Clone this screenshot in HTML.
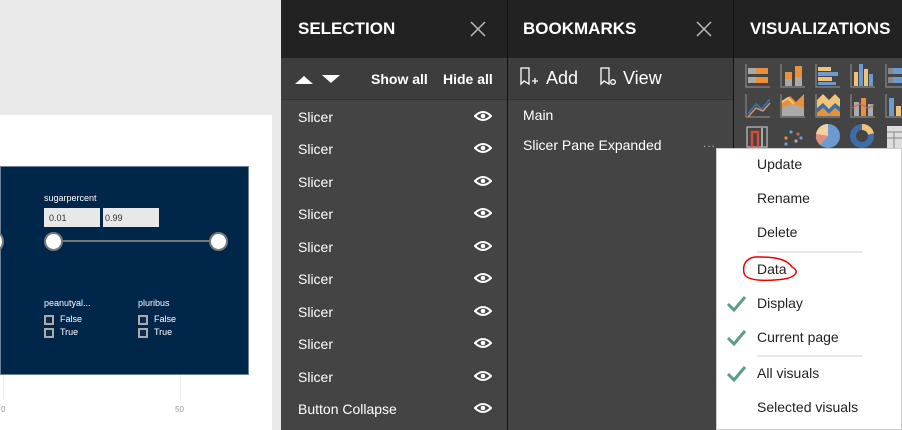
<!DOCTYPE html>
<html><head><style>
*{margin:0;padding:0;box-sizing:border-box}
body{width:902px;height:430px;overflow:hidden;position:relative;background:#eaeaea;font-family:"Liberation Sans",sans-serif}
.abs{position:absolute}
.hdr{background:#222;height:58px;top:0}
.ht{color:#fff;font-weight:bold;font-size:17px;top:19px}
.pane{background:#444;top:58px;height:372px}
.tool{background:#3d3d3d;top:58px;height:41px}
.sep{background:#333;height:1px;top:99px}
.row{color:#fff;font-size:14px;left:298px}
.mi{color:#222;font-size:14px;left:757px}
.cb{width:10px;height:10px;border:2px solid #aaa;background:#0f2a4c}
.sl{color:#fff;font-size:9px}
</style></head><body>
<div class="abs" style="left:0;top:115px;width:272px;height:315px;background:#fff"></div>
<div class="abs" style="left:0;top:166px;width:249px;height:209px;background:#00264a;border:1px solid #6b7f96"></div>
<div class="abs sl" style="left:44px;top:193px">sugarpercent</div>
<div class="abs" style="left:44px;top:208px;width:56px;height:19px;background:#e8e8e8;font-size:9px;padding:5px 5px;color:#333">0.01</div>
<div class="abs" style="left:103px;top:208px;width:56px;height:19px;background:#e8e8e8;font-size:9px;padding:5px 2px;color:#333">0.99</div>
<div class="abs" style="left:54px;top:240px;width:166px;height:2px;background:#777"></div>
<div class="abs" style="left:44px;top:232px;width:19px;height:19px;border-radius:50%;background:#fff;border:2px solid #777"></div>
<div class="abs" style="left:209px;top:232px;width:19px;height:19px;border-radius:50%;background:#fff;border:2px solid #777"></div>
<div class="abs" style="left:-10px;top:232px;width:14px;height:19px;border-radius:50%;background:#fff;border:2px solid #777"></div>
<div class="abs sl" style="left:44px;top:298px">peanutyal...</div>
<div class="abs sl" style="left:138px;top:298px">pluribus</div>
<div class="abs cb" style="left:44px;top:315px"></div><div class="abs sl" style="left:60px;top:314px">False</div>
<div class="abs cb" style="left:44px;top:328px"></div><div class="abs sl" style="left:60px;top:327px">True</div>
<div class="abs cb" style="left:138px;top:315px"></div><div class="abs sl" style="left:154px;top:314px">False</div>
<div class="abs cb" style="left:138px;top:328px"></div><div class="abs sl" style="left:154px;top:327px">True</div>
<div class="abs" style="left:3px;top:375px;width:1px;height:25px;background:#eee"></div>
<div class="abs" style="left:180px;top:375px;width:1px;height:25px;background:#eee"></div>
<div class="abs" style="left:1px;top:405px;font-size:8px;color:#999">0</div>
<div class="abs" style="left:175px;top:405px;font-size:8px;color:#999">50</div>

<div class="abs hdr" style="left:281px;width:621px"></div>
<div class="abs pane" style="left:281px;width:621px"></div>
<div class="abs tool" style="left:281px;width:452px"></div>
<div class="abs sep" style="left:281px;width:452px"></div>
<div class="abs" style="left:507px;top:0;width:1px;height:430px;background:#111"></div>
<div class="abs" style="left:733px;top:0;width:1px;height:430px;background:#111"></div>
<div class="abs ht" style="left:298px">SELECTION</div>
<div class="abs ht" style="left:523px">BOOKMARKS</div>
<div class="abs ht" style="left:750px">VISUALIZATIONS</div>
<svg class="abs" style="left:469px;top:20px" width="18" height="18"><path d="M2 2L16 16M16 2L2 16" stroke="#bbb" stroke-width="1.5"/></svg>
<svg class="abs" style="left:695px;top:20px" width="18" height="18"><path d="M2 2L16 16M16 2L2 16" stroke="#bbb" stroke-width="1.5"/></svg>
<svg class="abs" style="left:295px;top:73px" width="50" height="12"><path d="M0 11L9 3L18 11Z" fill="#fff"/><path d="M27 2L45 2L36 10Z" fill="#fff"/></svg>
<div class="abs" style="left:371px;top:71px;color:#fff;font-weight:bold;font-size:14px">Show all</div>
<div class="abs" style="left:443px;top:71px;color:#fff;font-weight:bold;font-size:14px">Hide all</div>
<div class="abs row" style="top:109px">Slicer</div>
<div class="abs row" style="top:141px">Slicer</div>
<div class="abs row" style="top:174px">Slicer</div>
<div class="abs row" style="top:206px">Slicer</div>
<div class="abs row" style="top:239px">Slicer</div>
<div class="abs row" style="top:271px">Slicer</div>
<div class="abs row" style="top:304px">Slicer</div>
<div class="abs row" style="top:336px">Slicer</div>
<div class="abs row" style="top:369px">Slicer</div>
<div class="abs row" style="top:401px">Button Collapse</div>
<svg class="abs" style="left:474px;top:110px" width="18" height="310">
<g id="e"><path d="M1 6Q9 -2 17 6Q9 14 1 6Z" fill="none" stroke="#fff" stroke-width="2"/><circle cx="9" cy="6" r="2.3" fill="#fff"/></g>
<use href="#e" y="32"/><use href="#e" y="65"/><use href="#e" y="97"/><use href="#e" y="130"/><use href="#e" y="162"/><use href="#e" y="195"/><use href="#e" y="227"/><use href="#e" y="260"/><use href="#e" y="292"/>
</svg>

<svg class="abs" style="left:519px;top:67px" width="100" height="22"><path d="M2 1V17L5 14L10 17V1Z" fill="none" stroke="#fff" stroke-width="1.3"/><path d="M13 14H19M16 11V17" stroke="#fff" stroke-width="1.3"/>
<path d="M82 1V17L85 14L90 17V1Z" fill="none" stroke="#fff" stroke-width="1.3"/><circle cx="94" cy="15" r="2.3" fill="none" stroke="#fff" stroke-width="1.3"/></svg>
<div class="abs" style="left:546px;top:68px;color:#fff;font-size:18px">Add</div>
<div class="abs" style="left:623px;top:68px;color:#fff;font-size:18px">View</div>
<div class="abs" style="left:523px;top:107px;color:#fff;font-size:14px">Main</div>
<div class="abs" style="left:523px;top:137px;color:#fff;font-size:14px">Slicer Pane Expanded</div>
<div class="abs" style="left:703px;top:136px;color:#aaa;font-size:12px;letter-spacing:1px">...</div>

<svg class="abs" style="left:744px;top:62px" width="158" height="86">
<g stroke="#888" stroke-width="1.2" fill="none">
<path d="M2 2V25H26"/><path d="M37 2V25H61"/><path d="M72 2V25H96"/><path d="M107 2V25H131"/><path d="M142 2V25H158"/>
<path d="M2 32V55H26"/><path d="M37 32V55H61"/><path d="M72 32V55H96"/><path d="M107 32V55H131"/><path d="M142 32V55H158"/>
</g>
<g>
<rect x="4" y="6" width="20" height="6" fill="#aaa"/><rect x="12" y="6" width="12" height="6" fill="#e8913a"/><rect x="4" y="15" width="20" height="6" fill="#aaa"/><rect x="12" y="15" width="12" height="6" fill="#e8913a"/>
<rect x="41" y="10" width="7" height="14" fill="#aaa"/><rect x="41" y="10" width="7" height="7" fill="#e8913a"/><rect x="51" y="4" width="7" height="20" fill="#aaa"/><rect x="51" y="4" width="7" height="11" fill="#e8913a"/>
<rect x="74" y="5" width="13" height="4" fill="#f2c27a"/><rect x="74" y="10" width="20" height="4" fill="#6c9bd2"/><rect x="74" y="15" width="14" height="4" fill="#f2c27a"/><rect x="74" y="20" width="18" height="3" fill="#6c9bd2"/>
<rect x="110" y="10" width="4" height="14" fill="#f2c27a"/><rect x="115" y="2" width="4" height="22" fill="#6c9bd2"/><rect x="120" y="7" width="4" height="17" fill="#f2c27a"/><rect x="125" y="12" width="4" height="12" fill="#6c9bd2"/>
<rect x="144" y="6" width="14" height="6" fill="#6c9bd2"/><rect x="144" y="6" width="5" height="6" fill="#888"/><rect x="144" y="15" width="14" height="6" fill="#6c9bd2"/><rect x="144" y="15" width="5" height="6" fill="#888"/>
<path d="M4 52L12 42L18 47L26 37" stroke="#3d6ea8" stroke-width="1.8" fill="none"/><path d="M4 55L12 46L19 49L26 41" stroke="#d0906a" stroke-width="1.5" fill="none"/>
<path d="M38 54V40L46 34L52 40L60 32V54Z" fill="#e8913a"/><path d="M38 54V46L47 42L60 46V54Z" fill="#aaa"/><path d="M38 40L44 36L50 42" stroke="#f2c27a" stroke-width="2" fill="none"/>
<path d="M73 54V38L79 32L85 38L91 32L96 37V54Z" fill="#f2c27a"/><path d="M73 46L79 41L85 47L91 41L96 45V50L91 46L85 52L79 46L73 51Z" fill="#3d6ea8"/><path d="M73 51L79 46L85 52L91 46L96 50V54H73Z" fill="#e8913a"/>
<rect x="110" y="40" width="5" height="14" fill="#aaa"/><rect x="117" y="36" width="5" height="18" fill="#e8913a"/><rect x="124" y="42" width="5" height="12" fill="#aaa"/><path d="M108 46L116 42L124 46L130 43" stroke="#d0605a" stroke-width="1.2" fill="none"/>
<rect x="145" y="36" width="5" height="18" fill="#6c9bd2"/><rect x="152" y="44" width="5" height="10" fill="#f2c27a"/>
<rect x="3" y="65" width="20" height="20" fill="none" stroke="#aaa" stroke-width="1.5"/><path d="M8 85V70H14V85" stroke="#d84a3a" stroke-width="2.5" fill="none"/><path d="M18 66V85" stroke="#aaa" stroke-width="2"/>
<circle cx="42" cy="76" r="1.6" fill="#e8913a"/><circle cx="47" cy="70" r="1.6" fill="#6c9bd2"/><circle cx="54" cy="72" r="1.6" fill="#d0605a"/><circle cx="52" cy="79" r="1.6" fill="#aaa"/><circle cx="57" cy="76" r="1.6" fill="#6c9bd2"/><circle cx="42" cy="82" r="1.6" fill="#6c9bd2"/>
<circle cx="84" cy="74" r="12" fill="#6c9bd2"/><path d="M84 74L84 62A12 12 0 0 0 72 72Z" fill="#f2d0a0"/><path d="M84 74L72 72A12 12 0 0 0 76 83Z" fill="#e0907a"/>
<circle cx="118" cy="74" r="9" fill="none" stroke="#3d6ea8" stroke-width="6"/><path d="M118 65A9 9 0 0 1 127 72" stroke="#f2c27a" stroke-width="6" fill="none"/>
<rect x="143" y="64" width="15" height="22" fill="#ddd"/><path d="M143 70H158M143 76H158M150 70V86" stroke="#888" stroke-width="1"/>
</g></svg>

<div class="abs" style="left:716px;top:148px;width:186px;height:282px;background:#fff;border:1px solid #ccc"></div>
<div class="abs mi" style="top:156px">Update</div>
<div class="abs mi" style="top:190px">Rename</div>
<div class="abs mi" style="top:224px">Delete</div>
<div class="abs" style="left:757px;top:251px;width:105px;height:2px;background:#e6e6e6"></div>
<div class="abs mi" style="top:261px">Data</div>
<div class="abs mi" style="top:295px">Display</div>
<div class="abs mi" style="top:329px">Current page</div>
<div class="abs" style="left:757px;top:355px;width:105px;height:2px;background:#e6e6e6"></div>
<div class="abs mi" style="top:365px">All visuals</div>
<div class="abs mi" style="top:399px">Selected visuals</div>
<svg class="abs" style="left:726px;top:293px" width="22" height="90"><g stroke="#5a9e8a" stroke-width="3" fill="none"><path d="M2 11L8 17L19 4"/><path d="M2 45L8 51L19 38"/><path d="M2 81L8 87L19 74"/></g></svg>
<svg class="abs" style="left:740px;top:253px" width="62" height="32"><path d="M20 4C8 3 2 10 4 20C6 29 30 28 44 26C56 24 60 18 52 14C48 8 40 4 20 4" fill="none" stroke="#e00" stroke-width="1.5"/></svg>
</body></html>
